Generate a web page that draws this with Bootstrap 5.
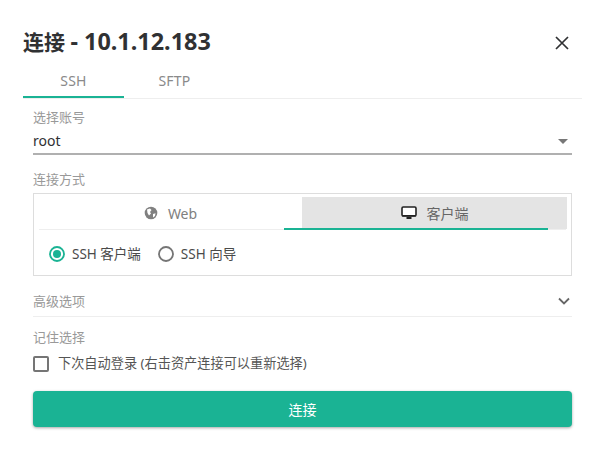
<!DOCTYPE html>
<html lang="zh"><head><meta charset="utf-8"><title>连接</title>
<link href="https://cdn.jsdelivr.net/npm/bootstrap@5.3.0/dist/css/bootstrap.min.css" rel="stylesheet">
<style>
html,body{height:100%;overflow:hidden}
body{background:#fff;color:#333;font-family:"Noto Sans","Noto Sans CJK SC",sans-serif;font-size:14px}
.dlg{width:600px;height:450px;padding:28px 18px 0 23px}
.dlg-title{font-size:21px;font-weight:700;line-height:27px;color:#303133;margin:0}
.title-num{font-size:23.4px}
.dlg-close{width:14px;height:14px;margin:8px 13px 0 0;background:none;border:0;padding:0;line-height:0;color:#303133}
.tabs-row{margin-top:13px;height:30px;border-bottom:1px solid #eee;display:flex}
.tab-item{width:101px;height:29px;text-align:center;font-size:14px;line-height:24px;color:#8a8a8a;letter-spacing:.2px}
.tab-on{border-bottom:2px solid #1ab394}
.form-body{margin:0 10px;width:539px}
.label-first{margin-top:9px}
.f-label{font-size:13px;line-height:18px;color:#999;height:18px}
.sel-line{height:29px;padding-top:3px;border-bottom:2px solid #b0b0b0;display:flex;justify-content:space-between;align-items:center;font-size:14px;line-height:22px;color:#2f3133}
.caret-down{width:0;height:0;border-left:5px solid transparent;border-right:5px solid transparent;border-top:5px solid #777;margin-right:4px}
.label-conn{margin-top:15px}
.conn-box{border:1px solid #ddd;height:83px;margin-top:5px;padding:3px 5px 0}
.mode-row{position:relative;display:flex;height:33px;border-bottom:1px solid #eee}
.mode-item{flex:0 0 263px;display:flex;align-items:center;justify-content:center;gap:10px;color:#808080;font-size:14px}
.mode-on{flex:0 0 265px;background:#e4e4e4;color:#666}
.ink{position:absolute;left:245px;bottom:-1px;width:264px;height:2px;background:#1ab394}
.radio-row{display:flex;align-items:center;gap:17px;margin:15px 0 0 10px;font-size:13.5px;color:#4a4a4a;height:18px}
.radio-opt{display:flex;align-items:center;gap:7px}
.adv-row{height:32px;margin-top:9px;border-bottom:1px solid #eee;display:flex;justify-content:space-between;align-items:center;padding-right:2px}
.label-rem{margin-top:11px}
.chk-row{display:flex;align-items:center;gap:9px;margin-top:9px;font-size:13.2px;color:#555;height:18px}
.chk-box{width:16px;height:16px;border:2px solid #757575;border-radius:2px}
.go-btn{display:block;width:100%;height:36px;margin-top:18px;background:#1ab394;color:#fff;border:0;border-radius:4px;font-size:14px;box-shadow:0 1px 3px rgba(0,0,0,.35)}
</style></head>
<body>
<div class="dlg">
  <div class="d-flex justify-content-between align-items-start">
    <h1 class="dlg-title">连接 <span class="title-num">- 10.1.12.183</span></h1>
    <button class="dlg-close" aria-label="close"><svg width="14" height="14" viewBox="0 0 14 14"><path d="M1 1 13 13M13 1 1 13" stroke="currentColor" stroke-width="1.7" fill="none"/></svg></button>
  </div>
  <div class="tabs-row"><div class="tab-item tab-on">SSH</div><div class="tab-item">SFTP</div></div>
  <div class="form-body">
    <div class="f-label label-first">选择账号</div>
    <div class="sel-line"><span>root</span><span class="caret-down"></span></div>
    <div class="f-label label-conn">连接方式</div>
    <div class="conn-box">
      <div class="mode-row">
        <div class="mode-item"><svg width="14" height="14" viewBox="0 0 14 14"><circle cx="7" cy="7" r="6.3" fill="#808080"/><path d="M3 3.5 6 2.5 7.5 4 6 6 7 7.5 5 9.5 3.5 7ZM9 8l2.5-.8L11 10 9 11.5Z" fill="#fff"/></svg><span>Web</span></div>
        <div class="mode-item mode-on"><svg width="16" height="14" viewBox="0 0 16 14"><rect x="1" y="1" width="14" height="9" rx="1.2" fill="#fff" stroke="#222" stroke-width="1.6"/><path d="M1 9h14v1.5H1zM5.5 11h5v2h-5z" fill="#222"/></svg><span>客户端</span></div>
        <div class="ink"></div>
      </div>
      <div class="radio-row">
        <div class="radio-opt"><svg width="16" height="16" viewBox="0 0 16 16"><circle cx="8" cy="8" r="7" fill="#fff" stroke="#1ab394" stroke-width="1.8"/><circle cx="8" cy="8" r="4" fill="#1ab394"/></svg><span>SSH 客户端</span></div>
        <div class="radio-opt"><svg width="16" height="16" viewBox="0 0 16 16"><circle cx="8" cy="8" r="7" fill="#fff" stroke="#757575" stroke-width="1.8"/></svg><span>SSH 向导</span></div>
      </div>
    </div>
    <div class="adv-row"><span class="f-label">高级选项</span><svg width="12" height="8" viewBox="0 0 12 8"><path d="M1 1.5 6 6.5 11 1.5" stroke="#666" stroke-width="1.8" fill="none"/></svg></div>
    <div class="f-label label-rem">记住选择</div>
    <div class="chk-row"><span class="chk-box"></span><span>下次自动登录 (右击资产连接可以重新选择)</span></div>
    <button class="go-btn">连接</button>
  </div>
</div>
<script src="https://cdn.jsdelivr.net/npm/bootstrap@5.3.0/dist/js/bootstrap.bundle.min.js"></script>
</body></html>
